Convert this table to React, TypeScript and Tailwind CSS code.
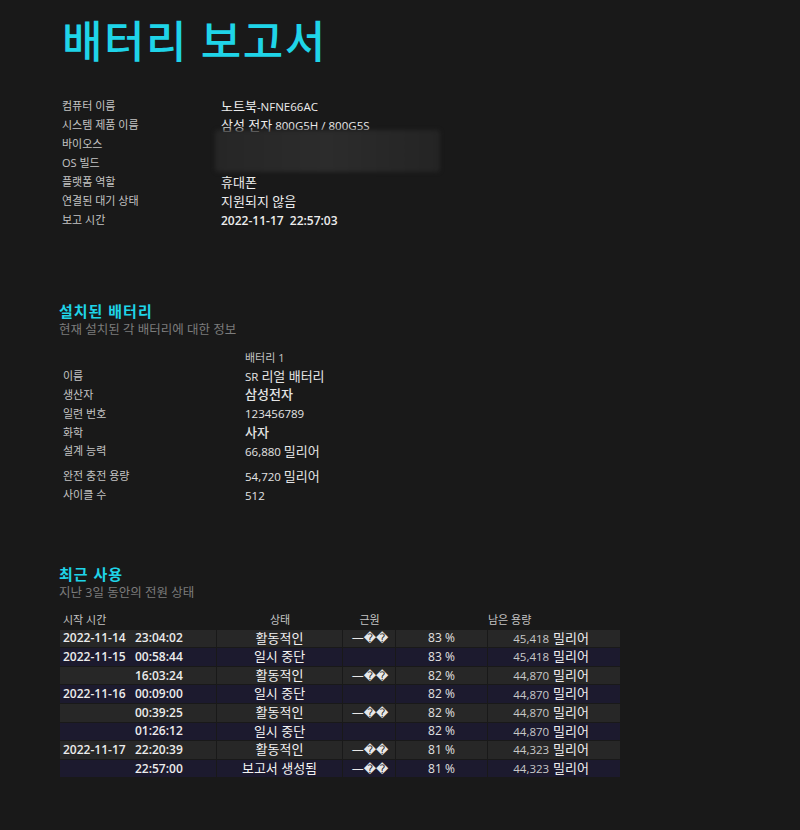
import React from "react";

const FONT = { fontFamily: '"Open Sans", "Noto Sans CJK KR", sans-serif' };

function K({ children, className = "" }: { children: React.ReactNode; className?: string }) {
  return <span className={"text-[13px] " + className}>{children}</span>;
}

const info: [string, React.ReactNode][] = [
  ["컴퓨터 이름", <><K>노트북</K>-NFNE66AC</>],
  ["시스템 제품 이름", <><K>삼성 전자</K> 800G5H / 800G5S</>],
  ["바이오스", ""],
  ["OS 빌드", ""],
  ["플랫폼 역할", <K>휴대폰</K>],
  ["연결된 대기 상태", <K>지원되지 않음</K>],
  ["보고 시간", <span className="text-[12px] font-semibold">2022-11-17&nbsp;&nbsp;22:57:03</span>],
];

const battery: [string, React.ReactNode, boolean?][] = [
  ["이름", <>SR <K>리얼 배터리</K></>],
  ["생산자", <K className="font-medium">삼성전자</K>],
  ["일련 번호", "123456789"],
  ["화학", <K className="font-medium">사자</K>],
  ["설계 능력", <>66,880 <K>밀리어</K></>],
  ["완전 충전 용량", <>54,720 <K>밀리어</K></>, true],
  ["사이클 수", "512"],
];

const rows: [string, string, string, boolean, string, string][] = [
  ["2022-11-14", "23:04:02", "활동적인", true, "83 %", "45,418"],
  ["2022-11-15", "00:58:44", "일시 중단", false, "83 %", "45,418"],
  ["", "16:03:24", "활동적인", true, "82 %", "44,870"],
  ["2022-11-16", "00:09:00", "일시 중단", false, "82 %", "44,870"],
  ["", "00:39:25", "활동적인", true, "82 %", "44,870"],
  ["", "01:26:12", "일시 중단", false, "82 %", "44,870"],
  ["2022-11-17", "22:20:39", "활동적인", true, "81 %", "44,323"],
  ["", "22:57:00", "보고서 생성됨", true, "81 %", "44,323"],
];

export default function App() {
  return (
    <div className="min-h-[830px] w-[800px] bg-[#191919] text-[#e8e8e8]" style={FONT}>
      <div className="pl-[62px] pt-[14px]">
        <h1 className="text-[44px] leading-[54px] font-medium text-[#1fd4e8] tracking-[1.5px]">배터리 보고서</h1>
      </div>

      <div className="pl-[62px] pt-[29px] flex flex-col">
        {info.map(([l, v], i) => (
          <div key={i} className="flex h-[19px] items-center">
            <div className="w-[159px] text-[11px] text-[#c4c4c4]">{l}</div>
            <div className="relative text-[11.5px] text-[#ededed]">
              {v}
              {i === 2 && (
                <div className="absolute left-[-6px] top-[-15px] w-[225px] h-[42px] bg-gradient-to-r from-[#262626] via-[#2c2c2c] to-[#242424] blur-[2px] rounded-sm" />
              )}
            </div>
          </div>
        ))}
      </div>

      <div className="pl-[59px] pt-[71px]">
        <h2 className="text-[15px] leading-[20px] font-bold text-[#1fd4e8] tracking-[1px]">설치된 배터리</h2>
        <p className="text-[12.5px] leading-[17px] text-[#7c7c7c]">현재 설치된 각 배터리에 대한 정보</p>
      </div>

      <div className="pl-[63px] pt-[12px] flex flex-col">
        <div className="flex h-[17px] items-center">
          <div className="w-[182px]" />
          <div className="text-[11px] text-[#c4c4c4]">배터리 1</div>
        </div>
        {battery.map(([l, v, extra], i) => (
          <div key={i} className={"flex h-[18.8px] items-center " + (extra ? "mt-[6px]" : "")}>
            <div className="w-[182px] text-[11px] text-[#c4c4c4]">{l}</div>
            <div className="text-[11.5px] text-[#e4e4e4]">{v}</div>
          </div>
        ))}
      </div>

      <div className="pl-[59px] pt-[59px]">
        <h2 className="text-[15px] leading-[20px] font-bold text-[#1fd4e8] tracking-[1px]">최근 사용</h2>
        <p className="text-[12.5px] leading-[17px] text-[#7c7c7c]">지난 3일 동안의 전원 상태</p>
      </div>

      <div className="pl-[60px] pt-[11px]">
        <div className="flex h-[18px] items-center text-[11px] text-[#c4c4c4]">
          <div className="w-[157px] pl-[3px]">시작 시간</div>
          <div className="w-[126px] text-center">상태</div>
          <div className="w-[53px] text-center">근원</div>
          <div className="w-[92px]" />
          <div className="w-[132px]">남은 용량</div>
        </div>
        <div className="flex flex-col gap-px">
          {rows.map(([d, t, s, src, p, c], i) => {
            const bg = i % 2 === 0 ? "bg-[#272727]" : "bg-[#1c1a2e]";
            return (
              <div key={i} className="flex h-[17.6px] gap-px">
                <div className={"w-[156px] flex items-center pl-[3px] text-[12px] font-semibold text-[#ececec] " + bg}>
                  <span className="w-[72px]">{d}</span>
                  <span>{t}</span>
                </div>
                <div className={"w-[125px] flex items-center justify-center text-[13px] text-[#f2f2f2] " + bg}>{s}</div>
                <div className={"w-[52px] flex items-center justify-center text-[12px] " + bg}>
                  {src ? <span style={{ fontFamily: '"DejaVu Sans", sans-serif' }} className="text-[12px] pl-[2px]">—��</span> : null}
                </div>
                <div className={"w-[91px] flex items-center justify-center text-[12px] text-[#e2e2e2] " + bg}>{p}</div>
                <div className={"w-[132px] flex items-center justify-end pr-[31px] " + bg}>
                  <span className="text-[11.5px] text-[#c8c8c8]">{c}</span>
                  <span className="text-[13px] text-[#eeeeee] ml-[4px]">밀리어</span>
                </div>
              </div>
            );
          })}
        </div>
      </div>
    </div>
  );
}
